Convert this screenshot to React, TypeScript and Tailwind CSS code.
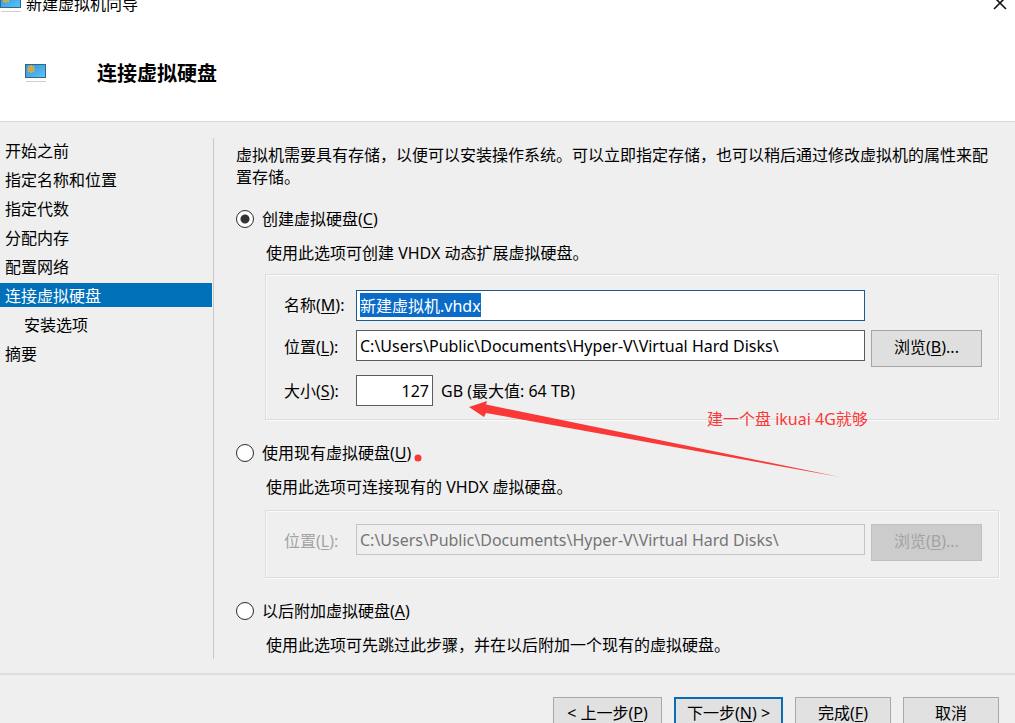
import { useEffect, useRef, useState } from "react";
import type { ReactNode } from "react";

const STEPS = [
  { label: "开始之前" },
  { label: "指定名称和位置" },
  { label: "指定代数" },
  { label: "分配内存" },
  { label: "配置网络" },
  { label: "连接虚拟硬盘", active: true },
  { label: "安装选项", nested: true },
  { label: "摘要" },
];

const DISK_PATH = "C:\\Users\\Public\\Documents\\Hyper-V\\Virtual Hard Disks\\";

const WizardIcon = () => (
  <svg width="22" height="20" viewBox="0 0 22 20" aria-hidden="true" className="shrink-0">
    <defs>
      <linearGradient id="screen" x1="0" y1="0" x2="1" y2="1">
        <stop offset="0" stopColor="#2f93d2" />
        <stop offset="1" stopColor="#5cc4fb" />
      </linearGradient>
    </defs>
    <rect x="0.5" y="0.5" width="20" height="13" fill="url(#screen)" stroke="#33668c" />
    <path
      d="M6 1v8M2 5h8M3 2l6 6M9 2l-6 6"
      stroke="#d9b45c"
      strokeWidth="1.6"
    />
    <circle cx="6" cy="5" r="2.8" fill="#d0a848" />
    <path d="M1 17.5h20" stroke="#d3cdd2" />
  </svg>
);

const Key = ({ children }: { children: string }) => (
  <>
    (<u className="underline-offset-2">{children}</u>)
  </>
);

const Option = ({
  id,
  value,
  selected,
  onSelect,
  title,
  hotkey,
  description,
}: {
  id: string;
  value: string;
  selected: string;
  onSelect: (value: string) => void;
  title: string;
  hotkey: string;
  description: ReactNode;
}) => (
  <>
    <div className="flex h-6 items-center gap-2">
      <input
        type="radio"
        id={id}
        name="disk"
        checked={selected === value}
        onChange={() => onSelect(value)}
        className="size-[18px] appearance-none rounded-full border border-[#2b2b2b] bg-white checked:bg-[radial-gradient(circle,#333_0_4px,#fff_5px)]"
      />
      <label htmlFor={id}>
        {title}
        <Key>{hotkey}</Key>
      </label>
    </div>
    <p className="mt-[10px] pl-[30px] leading-6">{description}</p>
  </>
);

const BrowseButton = ({ disabled }: { disabled?: boolean }) => (
  <button
    type="button"
    disabled={disabled}
    className="h-[37px] w-[111px] border border-[#a5a5a5] bg-[#dfdfdf] pb-1 disabled:border-[#c0c0c0] disabled:bg-[#cccccc] disabled:text-[#a3a3a3]"
  >
    浏览
    <Key>B</Key>...
  </button>
);

const groupClass =
  "ml-[29px] border border-[#dcdcdc] pl-[18px] pr-4 shadow-[inset_1px_1px_0_#fafafa,1px_1px_0_#fafafa]";
const inputClass = "h-[31px] min-w-0 border bg-white px-[3px] outline-none";
const footerButton = "h-9 border border-[#a8a8a8] bg-[#e1e1e1] pb-1";

const App = () => {
  const nameRef = useRef<HTMLInputElement>(null);
  const [mode, setMode] = useState("create");
  const [name, setName] = useState("新建虚拟机.vhdx");
  const [size, setSize] = useState("127");
  const [path, setPath] = useState(DISK_PATH);

  // the file name starts out focused and selected
  useEffect(() => {
    nameRef.current?.focus();
    nameRef.current?.select();
  }, []);

  return (
    <div className="relative flex h-screen flex-col overflow-hidden bg-[#efefef] font-['Noto_Sans','Noto_Sans_CJK_SC',sans-serif] text-base text-black">
      <header className="h-[122px] shrink-0 border-b border-[#d9d9d9] bg-white">
        <div className="-mt-2 flex h-6 items-center gap-1 pr-2">
          <WizardIcon />
          <span className="grow">新建虚拟机向导</span>
          <button type="button" aria-label="关闭">
            <svg width="14" height="14" viewBox="0 0 14 14">
              <path d="M1 0l12 12M13 0L1 12" stroke="#111" strokeWidth="1.6" />
            </svg>
          </button>
        </div>
        <div className="mt-[42px] flex items-center gap-[50px] pl-[25px]">
          <WizardIcon />
          <h1 className="text-xl leading-8 font-bold">连接虚拟硬盘</h1>
        </div>
      </header>

      <div className="flex shrink-0">
        <nav className="mt-4 mb-[14px] w-[214px] shrink-0 border-r border-[#c9c9c9] pr-px">
          <ul className="flex flex-col gap-[5px]">
            {STEPS.map((step) => (
              <li key={step.label}>
                <a
                  href="#"
                  className={`block h-6 leading-[26px] ${step.nested ? "pl-6" : "pl-[5px]"} ${
                    step.active ? "bg-[#0070b9] text-white" : ""
                  }`}
                >
                  {step.label}
                </a>
              </li>
            ))}
          </ul>
        </nav>

        <main className="min-w-0 grow pt-[22px] pr-4 pb-4 pl-[22px]">
          <p className="mb-[19px] leading-[22px]">
            虚拟机需要具有存储，以便可以安装操作系统。可以立即指定存储，也可以稍后通过修改虚拟机的属性来配置存储。
          </p>

          <Option
            id="create"
            value="create"
            selected={mode}
            onSelect={setMode}
            title="创建虚拟硬盘"
            hotkey="C"
            description="使用此选项可创建 VHDX 动态扩展虚拟硬盘。"
          />
          <div className={`${groupClass} mt-[9px] flex flex-col pt-[14px] pb-[13px]`}>
            <div className="flex items-center pr-[117px]">
              <label htmlFor="name" className="w-[72px] shrink-0 leading-8">
                名称
                <Key>M</Key>:
              </label>
              <input
                id="name"
                ref={nameRef}
                value={name}
                onChange={(e) => setName(e.target.value)}
                className={`${inputClass} grow border-[#1a5a8c] selection:bg-[#0a6cc8] selection:text-white`}
              />
            </div>
            <div className="mt-[9px] flex items-start">
              <label htmlFor="path" className="w-[72px] shrink-0 leading-[34px]">
                位置
                <Key>L</Key>:
              </label>
              <input
                id="path"
                value={path}
                onChange={(e) => setPath(e.target.value)}
                className={`${inputClass} mr-[6px] grow border-[#5c5c5c]`}
              />
              <BrowseButton />
            </div>
            <div className="mt-2 flex items-center">
              <label htmlFor="size" className="w-[72px] shrink-0">
                大小
                <Key>S</Key>:
              </label>
              <input
                id="size"
                value={size}
                onChange={(e) => setSize(e.target.value)}
                className={`${inputClass} w-[77px] border-[#5c5c5c] text-right`}
              />
              <span className="ml-2">GB (最大值: 64 TB)</span>
            </div>
          </div>

          <div className="mt-[21px]">
            <Option
              id="existing"
              value="existing"
              selected={mode}
              onSelect={setMode}
              title="使用现有虚拟硬盘"
              hotkey="U"
              description="使用此选项可连接现有的 VHDX 虚拟硬盘。"
            />
          </div>
          <div className={`${groupClass} mt-[11px] flex items-start pt-[13px] pb-4`}>
            <label htmlFor="existing-path" className="w-[72px] shrink-0 leading-[34px] text-[#a3a3a3]">
              位置
              <Key>L</Key>:
            </label>
            <input
              id="existing-path"
              value={DISK_PATH}
              disabled
              className="mr-[6px] h-[31px] min-w-0 grow border border-[#c4c4c4] bg-[#efefef] px-[3px] text-[#757575]"
            />
            <BrowseButton disabled />
          </div>

          <div className="mt-[21px]">
            <Option
              id="later"
              value="later"
              selected={mode}
              onSelect={setMode}
              title="以后附加虚拟硬盘"
              hotkey="A"
              description="使用此选项可先跳过此步骤，并在以后附加一个现有的虚拟硬盘。"
            />
          </div>
        </main>
      </div>

      <footer className="flex shrink-0 justify-end border-t-2 border-[#dedede] pt-[22px] pr-4">
        <button type="button" className={`${footerButton} mr-3 w-[109px]`}>
          &lt; 上一步
          <Key>P</Key>
        </button>
        <button type="button" className="mr-3 h-9 w-[109px] border-2 border-[#0a6cb5] bg-[#e1e1e1] pb-1">
          下一步
          <Key>N</Key> &gt;
        </button>
        <button type="button" className={`${footerButton} mr-3 w-24`}>
          完成
          <Key>F</Key>
        </button>
        <button type="button" className={`${footerButton} w-24`}>
          取消
        </button>
      </footer>

      {/* hand-drawn notes on top of the dialog */}
      <svg
        width="430"
        height="80"
        viewBox="0 0 430 80"
        aria-hidden="true"
        className="pointer-events-none absolute top-[400px] left-[410px]"
      >
        <path d="M59 7L77 1L76 4.500L430 77L76 13L74 17Z" fill="#fa3838" />
        <circle cx="8" cy="58" r="3.500" fill="#fa3838" />
      </svg>
      <p className="pointer-events-none absolute top-[407px] left-[707px] leading-6 text-[#fa3838]">
        建一个盘 ikuai 4G就够
      </p>
    </div>
  );
};

export default App;
